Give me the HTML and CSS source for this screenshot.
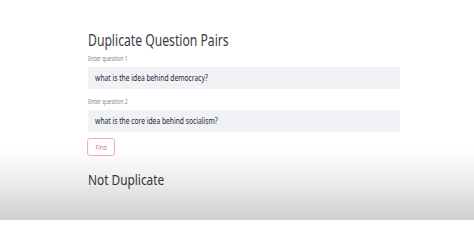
FILE: index.html
```html
<!DOCTYPE html>
<html>
<head>
<meta charset="utf-8">
<link rel="stylesheet" href="styles.css">
</head>
<body>
<div class="page">
  <main class="main">
    <h1 class="title">Duplicate Question Pairs</h1>
    <div class="field">
      <label class="label">Enter question 1</label>
      <div class="input">what is the idea behind democracy?</div>
    </div>
    <div class="field">
      <label class="label">Enter question 2</label>
      <div class="input">what is the core idea behind socialism?</div>
    </div>
    <button class="btn">Find</button>
    <h2 class="result">Not Duplicate</h2>
  </main>
</div>
</body>
</html>
```
FILE: styles.css
```css
html, body {
  margin: 0;
  padding: 0;
}
body {
  width: 474px;
  height: 220px;
  overflow: hidden;
  font-family: "Noto Sans", "Open Sans", sans-serif;
  color: #31333f;
}
.page {
  height: 220px;
  padding-left: 88px;
  box-sizing: border-box;
  background: linear-gradient(to bottom, #ffffff 0px, #ffffff 148px, #f1f1f1 175px, #dedede 200px, #cfcfcf 220px);
}
/* the captured page is horizontally condensed */
.main {
  padding-top: 30px;
  width: 395px;
  display: flex;
  flex-direction: column;
  transform: scaleX(0.79);
  transform-origin: 0 0;
}
.title {
  margin: 0;
  font-size: 15.4px;
  font-weight: 400;
  line-height: 22px;
  color: #3a3b46;
}
.field {
  display: flex;
  flex-direction: column;
}
.label {
  margin-top: 2px;
  font-size: 6.5px;
  line-height: 10px;
  color: #808495;
}
.input {
  margin-top: 3px;
  height: 22px;
  background: #f0f2f6;
  border-radius: 2px;
  padding-left: 9px;
  font-size: 8.5px;
  line-height: 22px;
  color: #262730;
}
.field + .field .label {
  margin-top: 8px;
}
.btn {
  align-self: flex-start;
  margin: 6px 0 0 -1px;
  width: 35px;
  height: 18px;
  padding: 0;
  background: #fff;
  border: 1.5px solid #e8a0b2;
  border-radius: 3px;
  color: #c87890;
  font-family: inherit;
  font-size: 7px;
}
.result {
  margin: 14px 0 0;
  font-size: 15px;
  font-weight: 400;
  line-height: 18px;
  color: #31333f;
}
```
